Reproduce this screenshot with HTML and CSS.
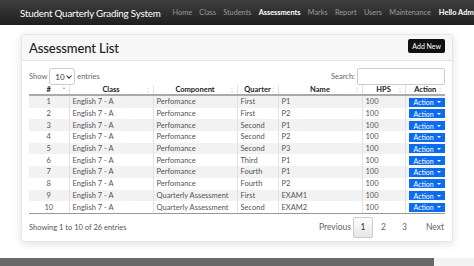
FILE: index.html
```html
<!DOCTYPE html>
<html lang="en">
<head>
    <meta charset="UTF-8">
    <meta name="viewport" content="width=device-width, initial-scale=1.0">
    <title>Assessment List</title>
    <link rel="stylesheet" href="styles.css">
</head>
<body>
    <nav class="navbar">
        <span class="brand">Student Quarterly Grading System</span>
        <ul class="nav-links">
            <li>Home</li>
            <li>Class</li>
            <li>Students</li>
            <li class="active">Assessments</li>
            <li>Marks</li>
            <li>Report</li>
            <li>Users</li>
            <li>Maintenance</li>
        </ul>
        <span class="user">Hello Admin</span>
    </nav>

    <main class="page">
        <section class="card">
            <div class="card-header">
                <h2>Assessment List</h2>
                <button class="btn-add">Add New</button>
            </div>
            <div class="card-body">
                <div class="dt-top">
                    <label class="dt-length">Show <span class="select">10 <span class="chev"></span></span> entries</label>
                    <label class="dt-search">Search: <span class="search-input"></span></label>
                </div>

                <table class="dt">
                    <colgroup>
                        <col style="width: 40px">
                        <col style="width: 84px">
                        <col style="width: 84px">
                        <col style="width: 41px">
                        <col style="width: 84px">
                        <col style="width: 43px">
                        <col style="width: 40px">
                    </colgroup>
                    <thead>
                        <tr>
                            <th class="sorted"># <span class="sort"></span></th>
                            <th>Class <span class="sort"></span></th>
                            <th>Component <span class="sort"></span></th>
                            <th>Quarter <span class="sort"></span></th>
                            <th>Name <span class="sort"></span></th>
                            <th>HPS <span class="sort"></span></th>
                            <th>Action <span class="sort"></span></th>
                        </tr>
                    </thead>
                    <tbody>
                        <tr><td class="num">1</td><td>English 7 - A</td><td>Perfomance</td><td>First</td><td>P1</td><td>100</td><td><span class="btn-action">Action <span class="caret"></span></span></td></tr>
                        <tr><td class="num">2</td><td>English 7 - A</td><td>Perfomance</td><td>First</td><td>P2</td><td>100</td><td><span class="btn-action">Action <span class="caret"></span></span></td></tr>
                        <tr><td class="num">3</td><td>English 7 - A</td><td>Perfomance</td><td>Second</td><td>P1</td><td>100</td><td><span class="btn-action">Action <span class="caret"></span></span></td></tr>
                        <tr><td class="num">4</td><td>English 7 - A</td><td>Perfomance</td><td>Second</td><td>P2</td><td>100</td><td><span class="btn-action">Action <span class="caret"></span></span></td></tr>
                        <tr><td class="num">5</td><td>English 7 - A</td><td>Perfomance</td><td>Second</td><td>P3</td><td>100</td><td><span class="btn-action">Action <span class="caret"></span></span></td></tr>
                        <tr><td class="num">6</td><td>English 7 - A</td><td>Perfomance</td><td>Third</td><td>P1</td><td>100</td><td><span class="btn-action">Action <span class="caret"></span></span></td></tr>
                        <tr><td class="num">7</td><td>English 7 - A</td><td>Perfomance</td><td>Fourth</td><td>P1</td><td>100</td><td><span class="btn-action">Action <span class="caret"></span></span></td></tr>
                        <tr><td class="num">8</td><td>English 7 - A</td><td>Perfomance</td><td>Fourth</td><td>P2</td><td>100</td><td><span class="btn-action">Action <span class="caret"></span></span></td></tr>
                        <tr><td class="num">9</td><td>English 7 - A</td><td>Quarterly Assessment</td><td>First</td><td>EXAM1</td><td>100</td><td><span class="btn-action">Action <span class="caret"></span></span></td></tr>
                        <tr><td class="num">10</td><td>English 7 - A</td><td>Quarterly Assessment</td><td>Second</td><td>EXAM2</td><td>100</td><td><span class="btn-action">Action <span class="caret"></span></span></td></tr>
                    </tbody>
                </table>

                <div class="dt-bottom">
                    <div class="dt-info">Showing 1 to 10 of 26 entries</div>
                    <ul class="pagination">
                        <li class="prev">Previous</li>
                        <li class="current">1</li>
                        <li>2</li>
                        <li>3</li>
                        <li class="next">Next</li>
                    </ul>
                </div>
            </div>
        </section>
    </main>

    <footer class="footer">
        <div class="footer-bar"></div>
        <div class="footer-side"></div>
    </footer>
</body>
</html>
```

FILE: styles.css
```css
body {
    margin: 0;
    font-family: Lato, 'Open Sans', sans-serif;
    color: #444;
    background: #fff;
    height: 266px;
    overflow: hidden;
}

/* top navbar */
.navbar {
    height: 25px;
    display: flex;
    align-items: center;
    padding-left: 20px;
    background: linear-gradient(#3f3f3f, #1f1f1f);
    white-space: nowrap;
    overflow: hidden;
}
.brand {
    color: #fff;
    font-size: 9.8px;
    letter-spacing: -0.2px;
    margin-right: 12px;
}
.nav-links {
    display: flex;
    gap: 7.3px;
    list-style: none;
    margin: 0;
    padding: 0;
    font-size: 7.3px;
    color: #9a9a9a;
}
.nav-links .active {
    color: #fff;
    font-weight: bold;
}
.user {
    margin-left: 8px;
    color: #fff;
    font-weight: bold;
    font-size: 7.5px;
}

/* card */
.page {
    padding: 9px 21px 0;
}
.card {
    width: 432px;
    height: 208px;
    box-sizing: border-box;
    border: 1px solid #e6e6e6;
    border-radius: 3px;
    box-shadow: 0 2px 8px rgba(0,0,0,0.12);
    overflow: hidden;
}
.card-header {
    height: 25px;
    display: flex;
    align-items: center;
    justify-content: space-between;
    padding: 0 7px;
    background: #f7f7f7;
    border-bottom: 1px solid #e3e3e3;
}
.card-header h2 {
    margin: 0;
    font-size: 13px;
    font-weight: 500;
    letter-spacing: -0.1px;
    color: #222;
}
.btn-add {
    background: #111;
    color: #fff;
    border: 0;
    border-radius: 2px;
    font-family: inherit;
    font-size: 7px;
    height: 14px;
    padding: 0 4px;
    margin-top: -4px;
}
.card-body {
    padding: 7px 7px 0;
    font-size: 7.5px;
}

/* datatable controls */
.dt-top {
    display: flex;
    justify-content: space-between;
    align-items: center;
    height: 17px;
    color: #666;
}
.dt-length,
.dt-search {
    display: flex;
    align-items: center;
    gap: 2px;
}
.select {
    width: 26px;
    height: 17px;
    box-sizing: border-box;
    border: 1px solid #ccc;
    border-radius: 3px;
    display: flex;
    align-items: center;
    justify-content: space-between;
    padding: 0 3px 0 5px;
    color: #333;
    font-size: 8px;
}
.chev {
    width: 3px;
    height: 3px;
    border-right: 1px solid #333;
    border-bottom: 1px solid #333;
    transform: rotate(45deg);
    margin-top: -2px;
}
.search-input {
    width: 88px;
    height: 17px;
    box-sizing: border-box;
    border: 1px solid #ccc;
    border-radius: 2px;
}

/* table */
.dt {
    width: 416px;
    table-layout: fixed;
    border-collapse: collapse;
    color: #555;
}
.dt th {
    position: relative;
    height: 9px;
    padding: 0;
    font-size: 7.5px;
    font-weight: bold;
    color: #222;
    text-align: center;
    border-left: 1px solid #e2e2e2;
    border-bottom: 2px solid #aaa;
}
.dt th:first-child,
.dt td:first-child {
    border-left: 0;
}
.sort {
    position: absolute;
    right: 3px;
    top: 2px;
    width: 3px;
    height: 6px;
}
.sort::before,
.sort::after {
    content: "";
    position: absolute;
    left: 0;
    border-left: 1.5px solid transparent;
    border-right: 1.5px solid transparent;
}
.sort::before {
    top: 0;
    border-bottom: 2px solid #ddd;
}
.sort::after {
    bottom: 0;
    border-top: 2px solid #ddd;
}
.sorted .sort::before {
    border-bottom-color: #8a8ee0;
}
.sorted .sort::after {
    border-top-color: transparent;
}
.dt td {
    height: 11.7px;
    padding: 0 0 0 3px;
    border-left: 1px solid #e2e2e2;
    white-space: nowrap;
    overflow: hidden;
}
.dt td.num {
    text-align: center;
    padding: 0;
}
.dt tbody tr:nth-child(odd) {
    background: #f2f2f2;
}
.dt tbody tr:last-child td {
    border-bottom: 1px solid #999;
}
.btn-action {
    display: inline-flex;
    align-items: center;
    gap: 3px;
    height: 9px;
    padding: 0 4px 0 5px;
    background: #0b6cf0;
    color: #fff;
    font-size: 7px;
    vertical-align: middle;
}
.caret {
    border-left: 2px solid transparent;
    border-right: 2px solid transparent;
    border-top: 2px solid #fff;
}

/* bottom info + paging */
.dt-bottom {
    display: flex;
    justify-content: space-between;
    align-items: center;
    margin-top: 3px;
    color: #555;
}
.pagination {
    display: flex;
    align-items: center;
    list-style: none;
    margin: 0;
    padding: 0;
    color: #666;
    font-size: 8.5px;
}
.pagination li {
    padding: 0 8px;
    line-height: 19px;
}
.pagination .prev {
    padding-right: 2px;
}
.pagination .next {
    padding: 0 1px 0 11px;
}
.pagination .current {
    width: 20px;
    padding: 0;
    box-sizing: border-box;
    text-align: center;
    color: #333;
    border: 1px solid #ccc;
    border-radius: 2px;
    background: linear-gradient(#fff, #e6e6e6);
}

/* page footer strip */
.footer {
    display: flex;
    height: 8px;
    margin-top: 16px;
}
.footer-bar {
    width: 434px;
    background: #686868;
}
.footer-side {
    flex: 1;
    background: #f3f3f3;
}
```
